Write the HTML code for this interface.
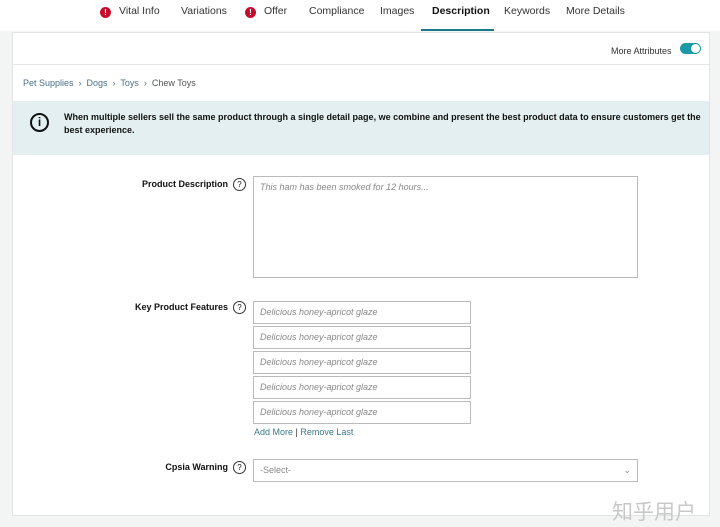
<!DOCTYPE html><html><head><style>
body{margin:0;width:720px;height:527px;background:#f3f4f4;font-family:"Liberation Sans",sans-serif;font-size:10px;color:#333;position:relative;overflow:hidden}
.a{position:absolute}
.tabs{left:0;top:0;width:720px;height:31px;background:#fff}
.tab{top:5px;font-size:10.5px;color:#333}
.err{display:inline-block;width:11px;height:11px;border-radius:50%;background:#c40e2d;color:#fff;font-size:8px;font-weight:bold;text-align:center;line-height:11px;margin-right:8px;vertical-align:-1px}
.panel{left:12px;top:32px;width:696px;height:482px;background:#fff;border:1px solid #e3e3e3}
.lbl{font-weight:bold;font-size:9px;color:#111;text-align:right;width:220px;left:26px}
.q{display:inline-block;width:11px;height:11px;border:1px solid #333;border-radius:50%;font-size:8px;line-height:11px;text-align:center;margin-left:5px;font-weight:normal}
.in{border:1px solid #bbb;background:#fff;font-style:italic;color:#888;font-size:9px;padding:0 6px;box-sizing:border-box;line-height:21px}
</style></head><body>
<div class="a tabs"></div>
<div class="a tab" style="left:100px"><span class="err">!</span>Vital Info</div>
<div class="a tab" style="left:181px">Variations</div>
<div class="a tab" style="left:245px"><span class="err">!</span>Offer</div>
<div class="a tab" style="left:309px">Compliance</div>
<div class="a tab" style="left:380px">Images</div>
<div class="a tab" style="left:432px;font-weight:bold;color:#111">Description</div>
<div class="a" style="left:421px;top:29px;width:73px;height:2px;background:#1b7a87"></div>
<div class="a tab" style="left:504px">Keywords</div>
<div class="a tab" style="left:566px">More Details</div>
<div class="a panel"></div>
<div class="a" style="left:13px;top:64px;width:696px;height:1px;background:#e6e6e6"></div>
<div class="a" style="left:611px;top:46px;font-size:9px">More Attributes</div>
<div class="a" style="left:680px;top:43px;width:21px;height:11px;border-radius:6px;background:#1a9aa6"><div class="a" style="right:1px;top:1px;width:9px;height:9px;border-radius:50%;background:#fff"></div></div>
<div class="a" style="left:23px;top:78px;font-size:9px;color:#4a6f8a">Pet Supplies &nbsp;›&nbsp; Dogs &nbsp;›&nbsp; Toys &nbsp;›&nbsp; <span style="color:#555">Chew Toys</span></div>
<div class="a" style="left:13px;top:101px;width:696px;height:54px;background:#e3eff0"></div>
<div class="a" style="left:30px;top:113px;width:19px;height:19px;border:2px solid #111;border-radius:50%;box-sizing:border-box;text-align:center;font-weight:bold;font-size:12px;line-height:15px;color:#111">i</div>
<div class="a" style="left:64px;top:111px;width:640px;font-weight:bold;font-size:9px;line-height:13px;color:#111">When multiple sellers sell the same product through a single detail page, we combine and present the best product data to ensure customers get the best experience.</div>
<div class="a lbl" style="top:178px">Product Description<span class="q">?</span></div>
<div class="a in" style="left:253px;top:176px;width:385px;height:102px;line-height:20px">This ham has been smoked for 12 hours...</div>
<div class="a lbl" style="top:301px">Key Product Features<span class="q">?</span></div>
<div class="a in" style="left:253px;top:301px;width:218px;height:23px">Delicious honey-apricot glaze</div>
<div class="a in" style="left:253px;top:326px;width:218px;height:23px">Delicious honey-apricot glaze</div>
<div class="a in" style="left:253px;top:351px;width:218px;height:23px">Delicious honey-apricot glaze</div>
<div class="a in" style="left:253px;top:376px;width:218px;height:23px">Delicious honey-apricot glaze</div>
<div class="a in" style="left:253px;top:401px;width:218px;height:23px">Delicious honey-apricot glaze</div>
<div class="a" style="left:254px;top:427px;font-size:9px;color:#3a7a8a">Add More <span style="color:#333">|</span> Remove Last</div>
<div class="a lbl" style="top:461px">Cpsia Warning<span class="q">?</span></div>
<div class="a in" style="left:253px;top:459px;width:385px;height:23px;font-style:normal">-Select-<span style="position:absolute;right:6px;top:0">⌄</span></div>
<div class="a" style="left:612px;top:497px;font-size:21px;color:#c8c8c8;font-family:'Noto Sans CJK SC',sans-serif;line-height:28px">知乎用户</div>
</body></html>
